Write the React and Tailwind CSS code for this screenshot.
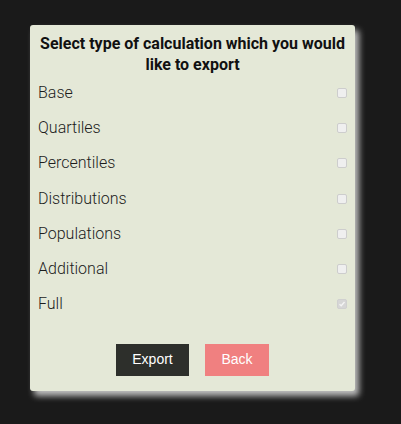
import React from "react";

const items = [
  { label: "Base", checked: false },
  { label: "Quartiles", checked: false },
  { label: "Percentiles", checked: false },
  { label: "Distributions", checked: false },
  { label: "Populations", checked: false },
  { label: "Additional", checked: false },
  { label: "Full", checked: true },
];

function Box({ checked }) {
  return checked ? (
    <span className="flex h-[10px] w-[10px] items-center justify-center rounded-[2px] border border-[#d0d0d0] bg-[#d6d6d6]">
      <svg width="8" height="8" viewBox="0 0 8 8">
        <path d="M1.5 4.2 L3.2 5.8 L6.5 2" fill="none" stroke="#f4f4f4" strokeWidth="1.4" />
      </svg>
    </span>
  ) : (
    <span className="block h-[10px] w-[10px] rounded-[2px] border border-[#cdcdcd] bg-[#efefef]" />
  );
}

export default function App() {
  return (
    <div className="min-h-screen bg-[#1a1a1a] pl-[30px] pt-[25px]">
      <div
        className="flex h-[366px] w-[325px] flex-col rounded-[3px] bg-[#e4e8d7] px-2 pt-[9px] shadow-[4px_5px_6px_rgba(200,200,200,0.95)]"
        style={{ fontFamily: "Roboto, 'Liberation Sans', sans-serif" }}
      >
        <div className="text-center text-[16px] font-bold leading-[20.5px] text-[#111]">
          Select type of calculation which you would like to export
        </div>
        <div className="flex flex-col">
          {items.map((it) => (
            <div key={it.label} className="flex h-[35.3px] items-center justify-between">
              <span className="text-[16px] font-light text-[#1c1c1c]">{it.label}</span>
              <Box checked={it.checked} />
            </div>
          ))}
        </div>
        <div
          className="mt-[21.5px] flex justify-center gap-4"
          style={{ fontFamily: "'Liberation Sans', Arial, sans-serif" }}
        >
          <button className="h-[32px] w-[73px] bg-[#2d2f2b] text-[14px] text-white">Export</button>
          <button className="h-[32px] w-[64px] bg-[#f08080] text-[14px] text-white">Back</button>
        </div>
      </div>
    </div>
  );
}
